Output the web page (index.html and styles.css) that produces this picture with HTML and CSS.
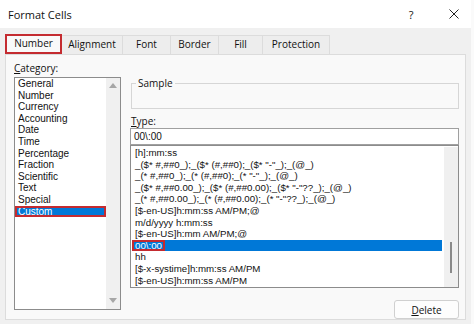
FILE: index.html
```html
<!DOCTYPE html>
<html lang="en">
<head>
  <meta charset="UTF-8">
  <title>Format Cells</title>
  <link rel="stylesheet" href="styles.css">
</head>
<body>
  <div class="window">
    <div class="titlebar">
      <span class="title">Format Cells</span>
      <span class="help">?</span>
      <span class="close">
        <svg width="10" height="10" viewBox="0 0 10 10"><path d="M0.5 0.5L9.5 9.5M9.5 0.5L0.5 9.5" stroke="#222" stroke-width="1"/></svg>
      </span>
    </div>
    <div class="content">
      <ul class="tabs">
        <li class="tab tab-number is-active">Number</li>
        <li class="tab tab-alignment">Alignment</li>
        <li class="tab tab-font">Font</li>
        <li class="tab tab-border">Border</li>
        <li class="tab tab-fill">Fill</li>
        <li class="tab tab-protection">Protection</li>
      </ul>
      <div class="panel">
        <div class="cat-col">
          <div class="label"><u>C</u>ategory:</div>
          <div class="listbox cat-list">
            <ul class="items">
              <li>General</li>
              <li>Number</li>
              <li>Currency</li>
              <li>Accounting</li>
              <li>Date</li>
              <li>Time</li>
              <li>Percentage</li>
              <li>Fraction</li>
              <li>Scientific</li>
              <li>Text</li>
              <li>Special</li>
              <li class="selected marked">Custom</li>
            </ul>
            <div class="vscroll arrows">
              <span class="arrow up"></span>
              <span class="arrow down"></span>
            </div>
          </div>
        </div>
        <div class="main-col">
          <fieldset class="sample">
            <legend>Sample</legend>
            <div class="sample-body"></div>
          </fieldset>
          <div class="label type-label"><u>T</u>ype:</div>
          <div class="input">00\:00</div>
          <div class="listbox type-list">
            <ul class="items">
              <li>[h]:mm:ss</li>
              <li>_($* #,##0_);_($* (#,##0);_($* "-"_);_(@_)</li>
              <li>_(* #,##0_);_(* (#,##0);_(* "-"_);_(@_)</li>
              <li>_($* #,##0.00_);_($* (#,##0.00);_($* "-"??_);_(@_)</li>
              <li>_(* #,##0.00_);_(* (#,##0.00);_(* "-"??_);_(@_)</li>
              <li>[$-en-US]h:mm:ss AM/PM;@</li>
              <li>m/d/yyyy h:mm:ss</li>
              <li>[$-en-US]h:mm AM/PM;@</li>
              <li class="selected"><span class="marked">00\:00</span></li>
              <li>hh</li>
              <li>[$-x-systime]h:mm:ss AM/PM</li>
              <li>[$-en-US]h:mm:ss AM/PM</li>
            </ul>
            <div class="vscroll">
              <span class="thumb"></span>
            </div>
          </div>
          <div class="buttons">
            <button class="btn"><u>D</u>elete</button>
          </div>
        </div>
      </div>
    </div>
  </div>
</body>
</html>
```

FILE: styles.css
```css
body{
  margin:0;
  background:#f0f0f0;
  font-family:"Open Sans", "Noto Sans", sans-serif;
  font-size:10px;
  color:#111;
}
ul{
  margin:0;
  padding:0;
  list-style:none;
}
.window{
  box-sizing:border-box;
  width:474px;
  height:324px;
  display:flex;
  flex-direction:column;
  overflow:hidden;
  border-right:3px solid #fafafa;
}
.titlebar{
  height:28px;
  flex:none;
  display:flex;
  align-items:center;
  padding-left:8px;
  background:#fff;
  font-size:11px;
}
.titlebar .title{
  flex:1;
}
.help{
  width:24px;
  text-align:center;
  font-size:11px;
  margin-right:17px;
}
.close{
  width:28px;
  margin-right:3px;
  display:flex;
  justify-content:center;
}
.content{
  flex:1;
  display:flex;
  flex-direction:column;
  padding:7px 5px 5px 5px;
}
.tabs{
  display:flex;
  height:19px;
  position:relative;
  z-index:1;
}
.tab{
  box-sizing:border-box;
  height:19px;
  line-height:17px;
  text-align:center;
  background:#ededed;
  border:1px solid #dcdcdc;
  border-left:none;
  border-bottom:none;
}
.tab.is-active{
  height:20px;
  margin-top:-1px;
  line-height:15px;
  background:#f9f9f9;
  border:2px solid #c42b30;
}
.tab-number{ width:57px; }
.tab-alignment{ width:61px; }
.tab-font{ width:48px; }
.tab-border{ width:48px; }
.tab-fill{ width:44px; }
.tab-protection{ width:67px; }
.panel{
  flex:1;
  display:flex;
  gap:9px;
  padding:7px 6px 0 8px;
  background:#f9f9f9;
  border:1px solid #dcdcdc;
}
.label{
  height:12px;
  line-height:12px;
  margin-bottom:3px;
}
.cat-col{
  width:107px;
}
.listbox{
  box-sizing:border-box;
  display:flex;
  background:#fff;
  border:1px solid #8c8c8c;
}
.cat-list{
  height:233px;
}
.items{
  flex:1;
  min-width:0;
  white-space:nowrap;
  overflow:hidden;
  font-family:"Liberation Sans", Arial, sans-serif;
  font-size:10px;
}
.items li{
  height:11.6px;
  line-height:11.6px;
  padding-left:3px;
}
.items li.selected{
  background:#0078d7;
  color:#fff;
}
.marked{
  box-sizing:border-box;
  outline:2px solid #c42b30;
  outline-offset:-2px;
}
.vscroll{
  width:14px;
  flex:none;
  background:#f0f0f0;
  position:relative;
}
.arrows{
  display:flex;
  flex-direction:column;
  justify-content:space-between;
  align-items:center;
  padding:5px 0 6px;
}
.arrow{
  width:0;
  height:0;
  border-left:4px solid transparent;
  border-right:4px solid transparent;
}
.arrow.up{
  border-bottom:5px solid #a6a6a6;
}
.arrow.down{
  border-top:5px solid #a6a6a6;
}
.main-col{
  flex:1;
  padding-top:15px;
}
.sample{
  margin:0 0 0 1px;
  padding:0;
  border:1px solid #d6d6d6;
}
.sample legend{
  margin-left:4px;
  padding:0 2px;
  line-height:12px;
}
.sample-body{
  height:19px;
}
.type-label{
  margin:6px 0 1px 1px;
}
.input{
  box-sizing:border-box;
  height:17px;
  line-height:15px;
  padding-left:3px;
  background:#fff;
  border:1px solid #a0a0a0;
  font-family:"Liberation Sans", Arial, sans-serif;
}
.type-list{
  height:143px;
  padding-top:1px;
}
.type-list .items{
  padding-left:1px;
  font-size:9.7px;
}
.type-list .items li{
  margin-right:2px;
}
.type-list .marked{
  display:inline-block;
  margin-left:-3px;
  padding:0 3px;
  height:11.6px;
}
.thumb{
  position:absolute;
  left:6px;
  top:95px;
  width:2px;
  height:31px;
  background:#8a8a8a;
}
.buttons{
  display:flex;
  justify-content:flex-end;
  margin-top:12px;
}
.btn{
  width:65px;
  height:19px;
  padding:0;
  font:inherit;
  color:#111;
  background:#fdfdfd;
  border:1px solid #d0d0d0;
  border-radius:3px;
}
```
